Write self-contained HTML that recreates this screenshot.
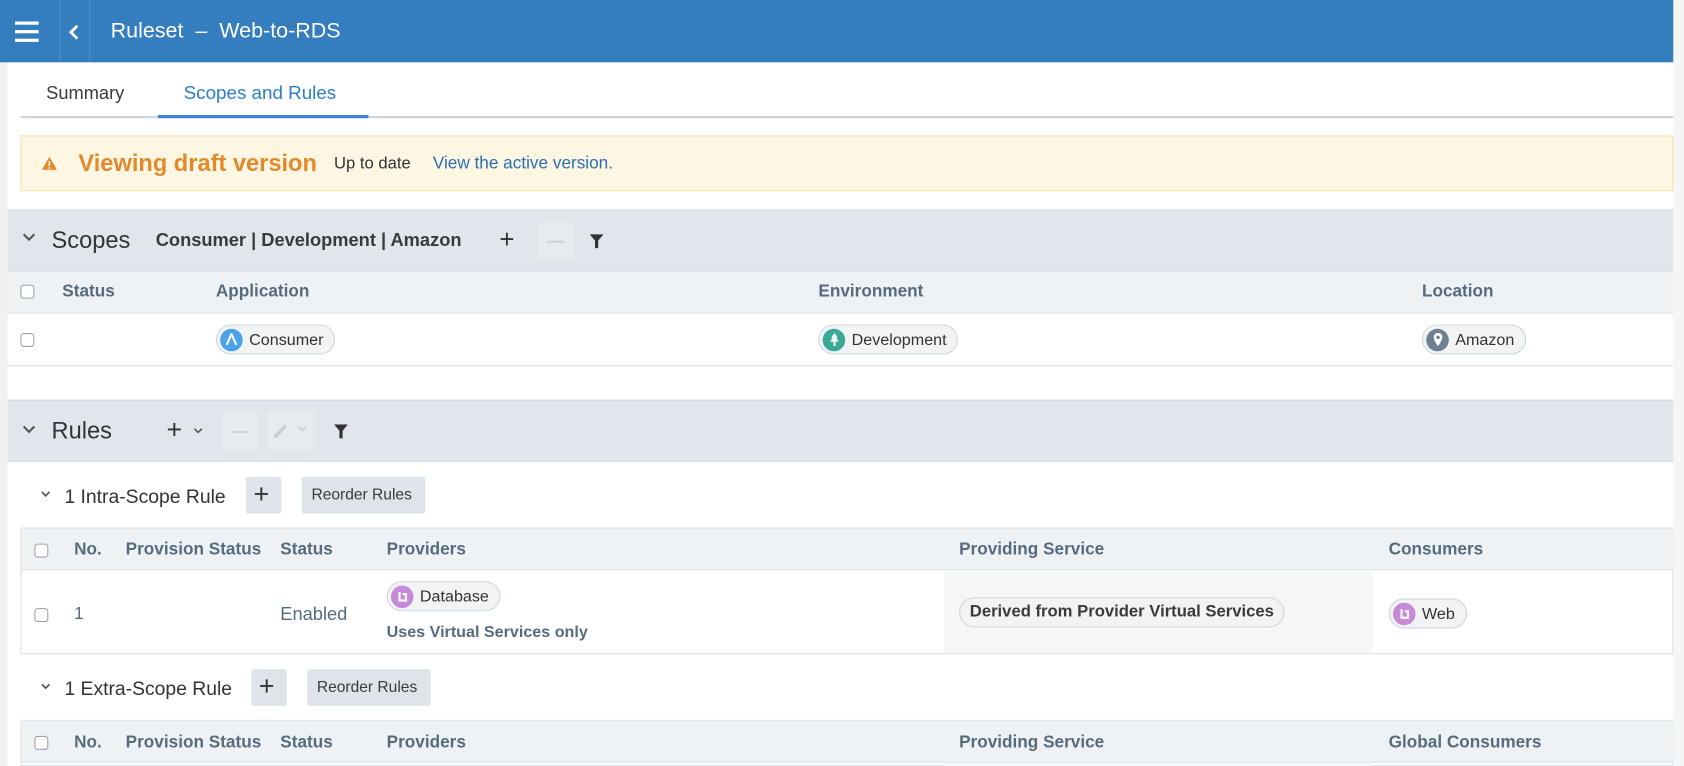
<!DOCTYPE html>
<html><head><meta charset="utf-8"><style>
*{box-sizing:border-box;margin:0;padding:0}
html,body{width:1684px;height:766px;overflow:hidden;background:#fff}
#w{position:absolute;left:0;top:0;width:1568px;height:713px;transform:scale(1.07398,1.07433);transform-origin:0 0;font-family:"Liberation Sans",sans-serif;color:#333;background:#f7f8fa}
.a{position:absolute}
.hdr{left:0;top:0;width:1558px;height:58px;background:#347dbf}
.t{white-space:nowrap;line-height:1}
.lbl{color:#566b7d;font-weight:bold;font-size:16px}
.cb{width:13px;height:13px;border:1px solid #9aa3ab;border-radius:3px;background:#fff}
.pill{height:28px;border:1px solid #cdd6df;border-radius:14px;background:#f1f3f5;display:flex;align-items:center;padding:0 10px 0 3px;font-size:15px;color:#333}
.ic{width:21px;height:21px;border-radius:50%;margin-right:6px;display:flex;align-items:center;justify-content:center}
.btn{background:#dfe4ea;border-radius:2px}
</style></head><body><div id="w">
<div class="a" style="left:0;top:58px;width:7px;height:655px;background:#eef0f2"></div>
<div class="a" style="left:7px;top:58px;width:1551px;height:655px;background:#fff"></div>
<div class="a" style="left:1558px;top:0;width:10px;height:713px;background:#f4f5f6"></div>
<div class="a hdr"></div>
<div class="a" style="left:55px;top:0;width:1px;height:58px;background:#4d8fcc"></div>
<div class="a" style="left:83px;top:0;width:1px;height:58px;background:#4d8fcc"></div>
<div class="a" style="left:14px;top:20px;width:22px;height:3px;background:#fff"></div>
<div class="a" style="left:14px;top:28px;width:22px;height:3px;background:#fff"></div>
<div class="a" style="left:14px;top:36px;width:22px;height:3px;background:#fff"></div>
<svg class="a" style="left:63px;top:22px" width="12" height="16"><path d="M9 2 L3 8 L9 14" stroke="#fff" stroke-width="2.6" fill="none"/></svg>
<div class="a t" style="left:103px;top:19px;font-size:20px;color:#fff">Ruleset &nbsp;–&nbsp; Web-to-RDS</div>

<div class="a t" style="left:43px;top:78px;font-size:17px;color:#3a3a3a">Summary</div>
<div class="a t" style="left:171px;top:78px;font-size:17.5px;color:#2b7dcb">Scopes and Rules</div>
<div class="a" style="left:19px;top:108px;width:1539px;height:2px;background:#cdd5dc"></div>
<div class="a" style="left:147px;top:107px;width:196px;height:3px;background:#3d86d6"></div>

<div class="a" style="left:19px;top:126px;width:1539px;height:52px;background:#fdf6e3;border:1px solid #f6e1a6"></div>
<svg class="a" style="left:38px;top:145px" width="16" height="14"><path d="M8 1 L15 13 L1 13 Z" fill="#e28a2b"/><rect x="7.2" y="5" width="1.6" height="4.5" fill="#fdf6e3"/><rect x="7.2" y="10.5" width="1.6" height="1.5" fill="#fdf6e3"/></svg>
<div class="a t" style="left:73px;top:141px;font-size:22px;font-weight:bold;color:#e28a2b">Viewing draft version</div>
<div class="a t" style="left:311px;top:145px;font-size:15.5px;color:#333">Up to date</div>
<div class="a t" style="left:403px;top:145px;font-size:16px;color:#2b6fb3">View the active version.</div>

<div class="a" style="left:7px;top:195px;width:1551px;height:57px;background:#e1e6ed;border-top:1px solid #d2d9e1"></div>
<svg class="a" style="left:21px;top:217px" width="12" height="8"><path d="M1 1 L6 6 L11 1" stroke="#555" stroke-width="2" fill="none"/></svg>
<div class="a t" style="left:48px;top:213px;font-size:22px;color:#333">Scopes</div>
<div class="a t" style="left:145px;top:215px;font-size:17px;font-weight:bold;color:#3a3a3a">Consumer | Development | Amazon</div>
<div class="a t" style="left:465px;top:212px;font-size:24px;color:#333">+</div>
<div class="a" style="left:501px;top:207px;width:33px;height:34px;background:#e7eaee"></div>
<div class="a" style="left:509px;top:224px;width:16px;height:2px;background:#cfd4da"></div>
<svg class="a" style="left:549px;top:218px" width="13" height="14"><path d="M0 0 H13 L8 6 V13 H5 V6 Z" fill="#333"/></svg>

<div class="a" style="left:7px;top:252px;width:1551px;height:40px;background:#eff2f5;border-top:1px solid #d6dde4;border-bottom:1px solid #dde3e9"></div>
<div class="a cb" style="left:19px;top:265px"></div>
<div class="a t lbl" style="left:58px;top:264px">Status</div>
<div class="a t lbl" style="left:201px;top:264px">Application</div>
<div class="a t lbl" style="left:762px;top:264px">Environment</div>
<div class="a t lbl" style="left:1324px;top:264px">Location</div>
<div class="a cb" style="left:19px;top:310px"></div>
<div class="a pill" style="left:201px;top:302px"><div class="ic" style="background:#4aa2ea"><svg width="11" height="12"><path d="M1 11 L5.5 1 L10 11" stroke="#fff" stroke-width="2" fill="none"/></svg></div>Consumer</div>
<div class="a pill" style="left:762px;top:302px"><div class="ic" style="background:#3aa896"><svg width="10" height="14"><path d="M5 1 L8 5 H6.5 L9 9 H6 V13 H4 V9 H1 L3.5 5 H2 Z" fill="#fff"/></svg></div>Development</div>
<div class="a pill" style="left:1324px;top:302px"><div class="ic" style="background:#6d7f90"><svg width="10" height="14"><path d="M5 1 C8 1 9 3 9 5 C9 8 5 13 5 13 C5 13 1 8 1 5 C1 3 2 1 5 1 Z" fill="#fff"/><circle cx="5" cy="5" r="1.6" fill="#6d7f90"/></svg></div>Amazon</div>
<div class="a" style="left:7px;top:340px;width:1551px;height:1px;background:#dde3e9"></div>

<div class="a" style="left:7px;top:372px;width:1551px;height:58px;background:#e1e6ed;border-top:1px solid #d2d9e1;border-bottom:1px solid #d2d9e1"></div>
<svg class="a" style="left:21px;top:396px" width="12" height="8"><path d="M1 1 L6 6 L11 1" stroke="#555" stroke-width="2" fill="none"/></svg>
<div class="a t" style="left:48px;top:390px;font-size:22px;color:#333">Rules</div>
<div class="a t" style="left:155px;top:388px;font-size:25px;color:#333">+</div>
<svg class="a" style="left:180px;top:398px" width="9" height="6"><path d="M1 1 L4.5 4.5 L8 1" stroke="#555" stroke-width="1.5" fill="none"/></svg>
<div class="a" style="left:207px;top:383px;width:33px;height:36px;background:#e7eaee"></div>
<div class="a" style="left:215px;top:401px;width:16px;height:2px;background:#cfd4da"></div>
<div class="a" style="left:249px;top:383px;width:45px;height:36px;background:#e7eaee"></div>
<svg class="a" style="left:254px;top:393px" width="34" height="16"><path d="M2 14 L12 3" stroke="#c8cdd3" stroke-width="3"/><path d="M24 4 L27.5 7.5 L31 4" stroke="#c8cdd3" stroke-width="1.5" fill="none"/></svg>
<svg class="a" style="left:311px;top:395px" width="13" height="14"><path d="M0 0 H13 L8 6 V13 H5 V6 Z" fill="#333"/></svg>

<svg class="a" style="left:38px;top:457px" width="9" height="6"><path d="M1 1 L4.5 4.5 L8 1" stroke="#555" stroke-width="1.6" fill="none"/></svg>
<div class="a t" style="left:60px;top:453px;font-size:18px;color:#333">1 Intra-Scope Rule</div>
<div class="a btn" style="left:229px;top:444px;width:33px;height:34px"></div>
<div class="a t" style="left:236px;top:448px;font-size:25px;color:#333">+</div>
<div class="a btn" style="left:281px;top:444px;width:115px;height:34px"></div>
<div class="a t" style="left:290px;top:454px;font-size:14.5px;color:#3a3a3a">Reorder Rules</div>

<div class="a" style="left:19px;top:491px;width:1539px;height:118px;border:1px solid #dbe1e7;background:#fff"></div>
<div class="a" style="left:20px;top:492px;width:1538px;height:39px;background:#eff2f5;border-bottom:1px solid #dde3e9"></div>
<div class="a cb" style="left:32px;top:506px"></div>
<div class="a t lbl" style="left:69px;top:504px">No.</div>
<div class="a t lbl" style="left:117px;top:504px">Provision Status</div>
<div class="a t lbl" style="left:261px;top:504px">Status</div>
<div class="a t lbl" style="left:360px;top:504px">Providers</div>
<div class="a t lbl" style="left:893px;top:504px">Providing Service</div>
<div class="a t lbl" style="left:1293px;top:504px">Consumers</div>
<div class="a" style="left:879px;top:532px;width:399px;height:76px;background:#f4f6f8"></div>
<div class="a cb" style="left:32px;top:566px"></div>
<div class="a t" style="left:69px;top:564px;font-size:16px;color:#566b7d">1</div>
<div class="a t" style="left:261px;top:563px;font-size:17px;color:#566b7d">Enabled</div>
<div class="a pill" style="left:360px;top:541px"><div class="ic" style="background:#c68ad9"><svg width="10" height="11"><path d="M2 1 V9 H8 V3 H5" stroke="#fff" stroke-width="2" fill="none"/></svg></div>Database</div>
<div class="a t" style="left:360px;top:581px;font-size:15px;font-weight:bold;color:#566b7d">Uses Virtual Services only</div>
<div class="a pill" style="left:893px;top:556px;padding:0 9px;font-weight:bold;font-size:15.5px;color:#3a3a3a">Derived from Provider Virtual Services</div>
<div class="a pill" style="left:1293px;top:557px"><div class="ic" style="background:#c68ad9"><svg width="10" height="11"><path d="M2 1 V9 H8 V3 H5" stroke="#fff" stroke-width="2" fill="none"/></svg></div>Web</div>

<svg class="a" style="left:38px;top:636px" width="9" height="6"><path d="M1 1 L4.5 4.5 L8 1" stroke="#555" stroke-width="1.6" fill="none"/></svg>
<div class="a t" style="left:60px;top:632px;font-size:18px;color:#333">1 Extra-Scope Rule</div>
<div class="a btn" style="left:234px;top:623px;width:33px;height:34px"></div>
<div class="a t" style="left:241px;top:627px;font-size:25px;color:#333">+</div>
<div class="a btn" style="left:286px;top:623px;width:115px;height:34px"></div>
<div class="a t" style="left:295px;top:633px;font-size:14.5px;color:#3a3a3a">Reorder Rules</div>

<div class="a" style="left:19px;top:670px;width:1539px;height:43px;border:1px solid #dbe1e7;background:#fff"></div>
<div class="a" style="left:20px;top:671px;width:1538px;height:39px;background:#eff2f5;border-bottom:1px solid #dde3e9"></div>
<div class="a" style="left:879px;top:710px;width:399px;height:3px;background:#f4f6f8"></div>
<div class="a cb" style="left:32px;top:685px"></div>
<div class="a t lbl" style="left:69px;top:684px">No.</div>
<div class="a t lbl" style="left:117px;top:684px">Provision Status</div>
<div class="a t lbl" style="left:261px;top:684px">Status</div>
<div class="a t lbl" style="left:360px;top:684px">Providers</div>
<div class="a t lbl" style="left:893px;top:684px">Providing Service</div>
<div class="a t lbl" style="left:1293px;top:684px">Global Consumers</div>
</div></body></html>
